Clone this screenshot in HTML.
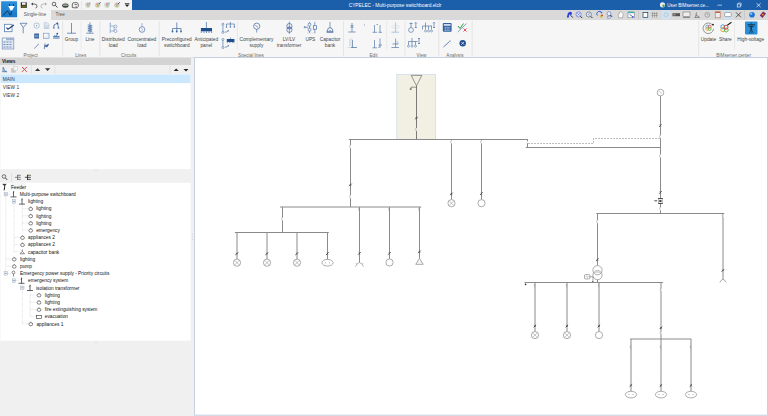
<!DOCTYPE html><html><head><meta charset="utf-8"><style>html,body{margin:0;padding:0;width:768px;height:416px;overflow:hidden;background:#f0f0f0}svg{display:block}text{font-family:'Liberation Sans', sans-serif}</style></head><body><svg width="768" height="416" viewBox="0 0 768 416"><rect x="0" y="0" width="768" height="416" fill="#f0f0f0"/><rect x="0" y="0" width="132" height="10" fill="#f4f4f4"/><rect x="132" y="0" width="636" height="10" fill="#1b5eaa"/><rect x="0" y="10" width="768" height="10" fill="#d9d9d9"/><rect x="18" y="10" width="33" height="10" fill="#f6f6f6"/><rect x="0" y="0" width="18.5" height="19.5" fill="#f4f4f4"/><rect x="0" y="20" width="768" height="37.6" fill="#f6f6f6"/><rect x="0" y="57.3" width="768" height="0.7" fill="#dcdcdc"/><defs><linearGradient id="lg" x1="0" y1="0" x2="0" y2="1"><stop offset="0" stop-color="#2b90dc"/><stop offset="1" stop-color="#1a78c8"/></linearGradient></defs><rect x="1.1" y="1.3" width="16" height="16" rx="0.6" fill="url(#lg)"/><path d="M3.4 15.5 L6.7 11.3 Q8 10.6 8.8 12.5 L9.9 14.9 Q11 15.6 11.3 13.5 V10.8" stroke="#0a1f3a" stroke-width="0.8" fill="none"/><path d="M8.2 6 L14.7 6 L12 10.5 L10.6 10.5 Z" fill="#ffffff"/><rect x="9.1" y="4" width="0.8" height="2" fill="#0a1f3a"/><rect x="13" y="4" width="0.8" height="2" fill="#0a1f3a"/><text x="348.7" y="6.6" font-size="4.8" fill="#ffffff" text-anchor="start" font-weight="normal">CYPELEC - Multi-purpose switchboard.elclr</text><text x="667.3" y="6.6" font-size="4.8" fill="#ffffff" textLength="41.5" lengthAdjust="spacingAndGlyphs">User BIMserver.ce...</text><circle cx="662.5" cy="4.8" r="2.6" fill="#e8eef5"/><circle cx="663.5" cy="5.8" r="1.2" fill="#49a84a"/><rect x="717.5" y="4.8" width="4.5" height="0.6" fill="#fff"/><rect x="737.2" y="4" width="3" height="3" fill="none" stroke="#fff" stroke-width="0.6"/><path d="M738.2 4 V3 H741.2 V6 H740.2" fill="none" stroke="#fff" stroke-width="0.5"/><path d="M756.6 3.3 L760.6 7.1 M760.6 3.3 L756.6 7.1" stroke="#fff" stroke-width="0.7"/><text x="23.7" y="15.9" font-size="4.8" fill="#555" text-anchor="start" font-weight="normal">Single-line</text><text x="55.6" y="15.9" font-size="4.6" fill="#555" text-anchor="start" font-weight="normal">Tree</text><rect x="20.8" y="2.3" width="6" height="5.6" fill="#2b2b2b"/><rect x="22" y="2.6" width="3.6" height="2.2" fill="#f4f4f4"/><rect x="21.5" y="5.6" width="4.6" height="2" fill="#6b6b1a"/><path d="M32 4 L34.5 4 Q37 4 37 6.3 Q37 8 35.5 8" stroke="#444" stroke-width="0.8" fill="none"/><path d="M31 4 L33 2.4 L33 5.6 Z" fill="#444"/><path d="M46 4 L43.5 4 Q41 4 41 6.3 Q41 8 42.5 8" stroke="#aaa" stroke-width="0.8" fill="none"/><path d="M47 4 L45 2.4 L45 5.6 Z" fill="#aaa"/><circle cx="54" cy="4" r="1.8" stroke="#333" stroke-width="0.7" fill="none"/><path d="M55.3 5.3 L57.5 7.5" stroke="#333" stroke-width="0.9"/><ellipse cx="65.4" cy="5.6" rx="3.2" ry="2.2" fill="#3c3c3c"/><path d="M63.2 4.4 Q65.4 2 67.6 4.4 Z" fill="#e8e8e8" stroke="#555" stroke-width="0.4"/><rect x="63" y="5" width="4.8" height="0.9" fill="#9ac89a"/><path d="M72.3 7.5 L72.3 4 Q72.5 2.6 74.5 2.6 L76.8 2.6 Q78.3 3 78.3 4.6 L78.3 6.5 L77 7.8 L74 7.8 Z" fill="#f0f0f0" stroke="#333" stroke-width="0.7"/><path d="M74.5 4.5 H77 M75.5 6.2 L77.5 7.8" stroke="#333" stroke-width="0.6"/><rect x="81.3" y="1" width="0.5" height="8.5" fill="#d8d8d8"/><circle cx="87.8" cy="5" r="2.5" fill="#f2ece2" stroke="#aaa" stroke-width="0.35"/><circle cx="87.0" cy="5.7" r="0.9" fill="none" stroke="#d8d8d8" stroke-width="0.6"/><circle cx="88.6" cy="4.5" r="0.9" fill="none" stroke="#5bb0e0" stroke-width="0.6"/><circle cx="88.2" cy="6.1" r="0.8" fill="none" stroke="#7cc25a" stroke-width="0.6"/><circle cx="87.39999999999999" cy="4.3" r="0.8" fill="none" stroke="#e06060" stroke-width="0.5"/><circle cx="89.8" cy="3" r="0.5" fill="#444"/><circle cx="97.7" cy="5" r="2.5" fill="#f2ece2" stroke="#aaa" stroke-width="0.35"/><circle cx="96.9" cy="5.7" r="0.9" fill="none" stroke="#f0b030" stroke-width="0.6"/><circle cx="98.5" cy="4.5" r="0.9" fill="none" stroke="#5bb0e0" stroke-width="0.6"/><circle cx="98.10000000000001" cy="6.1" r="0.8" fill="none" stroke="#7cc25a" stroke-width="0.6"/><circle cx="97.3" cy="4.3" r="0.8" fill="none" stroke="#e06060" stroke-width="0.5"/><path d="M98.9 4 L100.7 2.2" stroke="#222" stroke-width="0.7"/><circle cx="107" cy="5" r="2.5" fill="#f2ece2" stroke="#aaa" stroke-width="0.35"/><circle cx="106.2" cy="5.7" r="0.9" fill="none" stroke="#d8d8d8" stroke-width="0.6"/><circle cx="107.8" cy="4.5" r="0.9" fill="none" stroke="#5bb0e0" stroke-width="0.6"/><circle cx="107.4" cy="6.1" r="0.8" fill="none" stroke="#7cc25a" stroke-width="0.6"/><circle cx="106.6" cy="4.3" r="0.8" fill="none" stroke="#e06060" stroke-width="0.5"/><circle cx="109" cy="3" r="0.5" fill="#444"/><circle cx="116.9" cy="5" r="2.5" fill="#f2ece2" stroke="#aaa" stroke-width="0.35"/><circle cx="116.10000000000001" cy="5.7" r="0.9" fill="none" stroke="#f0b030" stroke-width="0.6"/><circle cx="117.7" cy="4.5" r="0.9" fill="none" stroke="#5bb0e0" stroke-width="0.6"/><circle cx="117.30000000000001" cy="6.1" r="0.8" fill="none" stroke="#7cc25a" stroke-width="0.6"/><circle cx="116.5" cy="4.3" r="0.8" fill="none" stroke="#e06060" stroke-width="0.5"/><path d="M118.10000000000001 4 L119.9 2.2" stroke="#222" stroke-width="0.7"/><rect x="124.8" y="3" width="4.6" height="0.7" fill="#222"/><path d="M124.8 4.6 L129.4 4.6 L127.1 7 Z" fill="#222"/><rect x="641.1" y="10.3" width="8.6" height="9" fill="#cfe3f3"/><rect x="661.7" y="10.3" width="8.6" height="9" fill="#cfe3f3"/><rect x="723.6" y="10.3" width="8.6" height="9" fill="#cfe3f3"/><rect x="638.3" y="10.5" width="0.5" height="9" fill="#b8b8b8"/><rect x="744.2" y="10.5" width="0.5" height="9" fill="#b8b8b8"/><path d="M566.8 17.6 L567.8 13.6 Q568.8 11.6 570.6 11.8 Q572.3 12.2 572 14.2 L570.6 15 L569.2 14.6 L568.8 17.6 Z" fill="#2a3ddd"/><path d="M570.6 15.2 L572.8 17.6" stroke="#222" stroke-width="0.9"/><circle cx="578.6" cy="14.4" r="2.6" fill="#e8f0ff" stroke="#4455cc" stroke-width="0.6"/><path d="M577.2 13 L580 15.8 M580 13 L577.2 15.8" stroke="#2244dd" stroke-width="0.8" stroke-dasharray="0.7 0.5"/><path d="M580.6 16.4 L582.2 18" stroke="#111" stroke-width="0.9"/><circle cx="588.8" cy="14.4" r="2.6" fill="#dde8f8" stroke="#555" stroke-width="0.6"/><path d="M589.6 13.4 L588.2 14.4 L589.6 15.4" stroke="#3366cc" stroke-width="0.5" fill="none"/><path d="M590.8 16.4 L592.4 18" stroke="#111" stroke-width="0.9"/><path d="M597.3 15.5 A2.6 2.6 0 1 1 601.8 13" stroke="#2a5ad8" stroke-width="0.9" fill="none"/><path d="M602.4 11.5 L602 13.6 L600.2 12.8 Z" fill="#2a5ad8"/><rect x="600.2" y="15.2" width="2.2" height="2.2" fill="#d8b020"/><rect x="601.4" y="14.6" width="1.4" height="1.4" fill="#d03020"/><circle cx="609" cy="13.6" r="2" fill="#eef3fb" stroke="#4466bb" stroke-width="0.6"/><path d="M610.4 15 L612 16.8" stroke="#111" stroke-width="0.9"/><rect x="607.2" y="16.2" width="3.2" height="2.2" fill="none" stroke="#6677dd" stroke-width="0.4"/><path d="M618.6 17.8 L618.4 14.2 Q618.6 12.8 619.4 13.4 L619.6 12 Q620.4 11.4 620.9 12.1 L621.3 11.8 Q622 11.8 622.2 12.6 L622.6 13 Q623.2 13.2 623 14.4 L622.6 17.8 Z" fill="#fafafa" stroke="#777" stroke-width="0.45"/><rect x="628" y="12" width="6.2" height="5.8" fill="#fff" stroke="#555" stroke-width="0.4"/><rect x="628" y="11.8" width="6.2" height="1.4" fill="#40b0b0"/><path d="M629.6 14.3 L633 17 M632 17.2 L633.2 17.2 L633 16" stroke="#1a44cc" stroke-width="0.8" fill="none"/><rect x="643" y="12.5" width="4.8" height="4.8" fill="#fff" stroke="#333" stroke-width="0.7"/><path d="M652.5 12 V17.8 M654.5 12 V17.8 M656.5 12 V17.8 M651.5 13.5 H658 M651.5 15.5 H658" stroke="#777" stroke-width="0.45"/><circle cx="666" cy="14.8" r="2" fill="none" stroke="#888" stroke-width="0.5" stroke-dasharray="0.8 0.5"/><rect x="672.5" y="13.2" width="7.5" height="3" fill="#555"/><rect x="673.5" y="13.8" width="2" height="1.6" fill="#999"/><rect x="683" y="12" width="7" height="4.5" fill="#eee" stroke="#666" stroke-width="0.5"/><rect x="683" y="17" width="7" height="0.7" fill="#666"/><path d="M694.5 17.4 H700 M695.5 17.4 L696.5 12.3 M696 15 L699 16.8" stroke="#555" stroke-width="0.6" fill="none"/><circle cx="707.3" cy="14.8" r="2.4" fill="none" stroke="#777" stroke-width="0.5"/><path d="M707.3 13.5 V14.8 H708.3" stroke="#777" stroke-width="0.45" fill="none"/><rect x="715.2" y="11.8" width="5" height="6" fill="#eee" stroke="#c0654a" stroke-width="0.6"/><rect x="715.2" y="11.8" width="5" height="1.2" fill="#c0654a"/><rect x="724.7" y="12.4" width="6.5" height="4.2" rx="0.6" fill="#fff" stroke="#666" stroke-width="0.5"/><path d="M736 12.3 L741 17.3 M741 12.3 L736 17.3" stroke="#333" stroke-width="0.8"/><circle cx="752" cy="14.8" r="2.8" fill="#1a73d8"/><circle cx="751.2" cy="13.8" r="1.2" fill="#7fc0f5"/><path d="M759.8 15.5 L763 11.5 L766 13.5 L762.5 18 Z" fill="#7b2d6e"/><circle cx="762.8" cy="14.6" r="0.9" fill="#f0a010"/><rect x="62.5" y="21" width="0.6" height="35.5" fill="#dadada"/><rect x="99.6" y="21" width="0.6" height="35.5" fill="#dadada"/><rect x="158.8" y="21" width="0.6" height="35.5" fill="#dadada"/><rect x="343" y="21" width="0.6" height="35.5" fill="#dadada"/><rect x="404.7" y="21" width="0.6" height="35.5" fill="#dadada"/><rect x="438.6" y="21" width="0.6" height="35.5" fill="#dadada"/><rect x="471.8" y="21" width="0.6" height="35.5" fill="#dadada"/><rect x="698.5" y="21" width="0.6" height="35.5" fill="#dadada"/><rect x="80.7" y="21.5" width="0.6" height="28" fill="#e0e0e0"/><rect x="236.9" y="21.5" width="0.6" height="28" fill="#e0e0e0"/><rect x="386.5" y="21.5" width="0.6" height="28" fill="#e0e0e0"/><rect x="734.3" y="21.5" width="0.6" height="28" fill="#e0e0e0"/><text x="30.6" y="57.2" font-size="4.6" fill="#6a6a6a" text-anchor="middle" font-weight="normal">Project</text><text x="80.7" y="57.2" font-size="4.6" fill="#6a6a6a" text-anchor="middle" font-weight="normal">Lines</text><text x="128.6" y="57.2" font-size="4.6" fill="#6a6a6a" text-anchor="middle" font-weight="normal">Circuits</text><text x="251" y="57.2" font-size="4.6" fill="#6a6a6a" text-anchor="middle" font-weight="normal">Special lines</text><text x="373.5" y="57.2" font-size="4.6" fill="#6a6a6a" text-anchor="middle" font-weight="normal">Edit</text><text x="421.4" y="57.2" font-size="4.6" fill="#6a6a6a" text-anchor="middle" font-weight="normal">View</text><text x="454.9" y="57.2" font-size="4.6" fill="#6a6a6a" text-anchor="middle" font-weight="normal">Analysis</text><text x="733.6" y="57.2" font-size="4.6" fill="#6a6a6a" text-anchor="middle" font-weight="normal">BIMserver.center</text><text x="71.5" y="40.6" font-size="4.8" fill="#454545" text-anchor="middle" font-weight="normal">Group</text><text x="90" y="40.6" font-size="4.8" fill="#454545" text-anchor="middle" font-weight="normal">Line</text><text x="113.2" y="40.6" font-size="4.8" fill="#454545" text-anchor="middle" font-weight="normal">Distributed</text><text x="113.2" y="46.8" font-size="4.8" fill="#454545" text-anchor="middle" font-weight="normal">load</text><text x="141.9" y="40.6" font-size="4.8" fill="#454545" text-anchor="middle" font-weight="normal">Concentrated</text><text x="141.9" y="46.8" font-size="4.8" fill="#454545" text-anchor="middle" font-weight="normal">load</text><text x="176.8" y="40.6" font-size="4.8" fill="#454545" text-anchor="middle" font-weight="normal">Preconfigured</text><text x="176.8" y="46.8" font-size="4.8" fill="#454545" text-anchor="middle" font-weight="normal">switchboard</text><text x="206.3" y="40.6" font-size="4.8" fill="#454545" text-anchor="middle" font-weight="normal">Anticipated</text><text x="206.3" y="46.8" font-size="4.8" fill="#454545" text-anchor="middle" font-weight="normal">panel</text><text x="256.4" y="40.6" font-size="4.8" fill="#454545" text-anchor="middle" font-weight="normal">Complementary</text><text x="256.4" y="46.8" font-size="4.8" fill="#454545" text-anchor="middle" font-weight="normal">supply</text><text x="289" y="40.6" font-size="4.8" fill="#454545" text-anchor="middle" font-weight="normal">LV/LV</text><text x="289" y="46.8" font-size="4.8" fill="#454545" text-anchor="middle" font-weight="normal">transformer</text><text x="310.4" y="40.6" font-size="4.8" fill="#454545" text-anchor="middle" font-weight="normal">UPS</text><text x="330" y="40.6" font-size="4.8" fill="#454545" text-anchor="middle" font-weight="normal">Capacitor</text><text x="330" y="46.8" font-size="4.8" fill="#454545" text-anchor="middle" font-weight="normal">bank</text><text x="708.5" y="40.6" font-size="4.8" fill="#454545" text-anchor="middle" font-weight="normal">Update</text><text x="725.4" y="40.6" font-size="4.8" fill="#454545" text-anchor="middle" font-weight="normal">Share</text><text x="750.7" y="40.6" font-size="4.8" fill="#454545" text-anchor="middle" font-weight="normal">High-voltage</text><rect x="4.4" y="24.3" width="7.6" height="7.4" fill="#fff" stroke="#5a7fb3" stroke-width="0.8"/><path d="M6.4 27.6 L8 29.3 L13.8 25" stroke="#1f3f78" stroke-width="1.2" fill="none"/><path d="M20.2 23.3 H27 L23.2 27.5 Z M23.2 27.5 V33.3" stroke="#3d67a0" stroke-width="0.7" fill="none"/><rect x="2.2" y="38" width="11.6" height="11" fill="#e3e9f2" stroke="#6d8fbd" stroke-width="0.7"/><rect x="2.2" y="38" width="11.6" height="2.2" fill="#9fb3cf"/><rect x="3" y="38.6" width="3" height="1.8" fill="#fff"/><path d="M3.5 42 H12.5 M3.5 44.5 H12.5 M3.5 47 H12.5" stroke="#5d80b3" stroke-width="0.9" stroke-dasharray="2 1"/><rect x="34.2" y="23.2" width="4.8" height="4.8" rx="1.2" fill="none" stroke="#8fa6c4" stroke-width="0.6"/><circle cx="36.6" cy="25.6" r="0.6" fill="#7890b0"/><path d="M44.3 22.8 H47.3 L48.8 24.3 V28.5 H44.3 Z M45.2 25 H47.8 M45.2 26.3 H47.8 M45.2 27.5 H47.8" stroke="#8fa6c4" stroke-width="0.5" fill="#f3f6fa"/><path d="M53.8 27.6 L53.9 25.2 L57.6 23 L58.4 27.5 M53.9 25.2 H55" stroke="#3d67a0" stroke-width="0.7" fill="none"/><circle cx="53.8" cy="27.8" r="0.9" fill="#5a80b8"/><circle cx="58.5" cy="27.8" r="0.9" fill="#5a80b8"/><circle cx="57.3" cy="23.5" r="0.9" fill="#2d5592"/><rect x="34.2" y="33.5" width="4.8" height="5" fill="#3d67a0"/><rect x="34.8" y="35.2" width="3.6" height="0.5" fill="#b8c8de"/><rect x="34.8" y="36.6" width="3.6" height="0.5" fill="#b8c8de"/><rect x="43.6" y="33.2" width="5.4" height="5.2" fill="#e8eef6" stroke="#6f90bd" stroke-width="0.6"/><rect x="44.3" y="33.9" width="2.3" height="2.2" fill="#fff"/><rect x="53.2" y="36" width="6.3" height="2.6" fill="#5a80b8"/><rect x="53.2" y="37" width="6.3" height="0.5" fill="#e0e8f3"/><path d="M56.8 36 V34.3" stroke="#2d5592" stroke-width="0.7"/><circle cx="57.3" cy="33.6" r="0.9" fill="#2d5592"/><path d="M54 35.5 H55.5" stroke="#2d5592" stroke-width="0.5"/><path d="M34.2 48.5 L38.2 44.6" stroke="#3d67a0" stroke-width="0.7"/><path d="M38.4 43.6 V45 M37.7 44.3 H39.1" stroke="#7d9dc4" stroke-width="0.4"/><path d="M44.2 49 L45 43.5 M45 46 L48.6 44.2 L47 47 Z" stroke="#2d5592" stroke-width="0.7" fill="#3d67a0"/><path d="M71.5 23 V33.2 M67 33.2 H76" stroke="#3d67a0" stroke-width="0.7"/><path d="M90 22.3 V33.2 M86.3 33.2 H93.7" stroke="#3d67a0" stroke-width="0.65"/><path d="M87.8 24.8 L92.2 25.8 L87.8 26.8 L92.2 27.8 L87.8 28.8 L92.2 29.8 L87.8 30.8 L92.2 31.6" stroke="#3d67a0" stroke-width="0.65" fill="none"/><path d="M110.2 22.5 V33 M110.2 26 H114 M110.2 31 H114 M111 23.5 L110 24.3" stroke="#6a8fc0" stroke-width="0.6" fill="none"/><circle cx="115.5" cy="26.5" r="1.5" fill="none" stroke="#6a8fc0" stroke-width="0.6"/><circle cx="115.5" cy="31" r="1.5" fill="none" stroke="#6a8fc0" stroke-width="0.6"/><path d="M114 26.5 V31" stroke="#6a8fc0" stroke-width="0.5"/><path d="M142 23 V26.5" stroke="#6a8fc0" stroke-width="0.6"/><circle cx="142" cy="29.5" r="2.8" fill="none" stroke="#4a72aa" stroke-width="0.7"/><path d="M141.4 28.3 L142.6 29.5 L141.6 30.7" stroke="#4a72aa" stroke-width="0.5" fill="none"/><path d="M176.8 22.5 V28.5 M172.5 28.5 H181 M172.5 28.5 V31 M176.8 28.5 V31 M181 28.5 V31" stroke="#3d67a0" stroke-width="0.7" fill="none"/><circle cx="172.5" cy="31.5" r="0.9" fill="#3d67a0"/><circle cx="176.8" cy="31.5" r="0.9" fill="#3d67a0"/><circle cx="181" cy="31.5" r="0.9" fill="#3d67a0"/><path d="M206.4 22 V28.2" stroke="#3d67a0" stroke-width="0.65"/><rect x="200.9" y="28" width="11.1" height="3.3" fill="#1f4f8f"/><path d="M201.3 31.3 V33 M204 31.3 V33 M206.5 31.3 V33 M209 31.3 V33 M211.6 31.3 V33" stroke="#1f4f8f" stroke-width="0.6"/><circle cx="222.9" cy="24.2" r="1" fill="#fff" stroke="#3d67a0" stroke-width="0.6"/><circle cx="222.9" cy="32.4" r="1" fill="#fff" stroke="#3d67a0" stroke-width="0.6"/><path d="M222.9 25.2 V31.4 M224.8 32 H227 L228.2 30.6 M227.5 30.4 H228.6 V31.5" stroke="#3d67a0" stroke-width="0.6" fill="none"/><path d="M230.4 22 V24 M226.5 24 H234.3 M226.5 24 V26.5 M230.4 24 V26.5 M234.3 24 V26.5" stroke="#3d67a0" stroke-width="0.6" fill="none"/><circle cx="226.5" cy="27" r="0.7" fill="#3d67a0"/><circle cx="230.4" cy="27" r="0.7" fill="#3d67a0"/><circle cx="234.3" cy="27" r="0.7" fill="#3d67a0"/><circle cx="222.9" cy="39.5" r="1" fill="#fff" stroke="#3d67a0" stroke-width="0.6"/><circle cx="222.9" cy="47.5" r="1" fill="#fff" stroke="#3d67a0" stroke-width="0.6"/><path d="M222.9 40.5 V46.5 M224.8 47 H227 L228.2 45.6 M227.5 45.4 H228.6 V46.5" stroke="#3d67a0" stroke-width="0.6" fill="none"/><path d="M230.5 37.5 V39" stroke="#3d67a0" stroke-width="0.6"/><rect x="226.8" y="39" width="7.6" height="3" fill="#1f4f8f"/><path d="M227.3 42 V43.2 M229.8 42 V43.2 M232.3 42 V43.2 M234 42 V43.2" stroke="#1f4f8f" stroke-width="0.5"/><circle cx="256.7" cy="26.2" r="3.1" fill="none" stroke="#3d67a0" stroke-width="0.7"/><path d="M255.2 25.2 L258 27.2 M256.7 29.3 V32.5" stroke="#3d67a0" stroke-width="0.65"/><path d="M289.4 21.5 V34" stroke="#3d67a0" stroke-width="0.55"/><ellipse cx="289.4" cy="26.2" rx="2.6" ry="2.8" fill="none" stroke="#3d67a0" stroke-width="0.7"/><ellipse cx="289.4" cy="29.6" rx="2.6" ry="2.8" fill="none" stroke="#3d67a0" stroke-width="0.7"/><path d="M287.4 27.9 H291.4" stroke="#3d67a0" stroke-width="0.8"/><path d="M304 27.2 H308" stroke="#3d67a0" stroke-width="0.7"/><path d="M305.2 26 L304 27.2 L305.2 28.4" stroke="#3d67a0" stroke-width="0.6" fill="none"/><path d="M309.5 22 V33 M314.8 21.8 V33" stroke="#3d67a0" stroke-width="0.6"/><rect x="308.2" y="23.2" width="2.6" height="2.8" rx="0.8" fill="#fff" stroke="#3d67a0" stroke-width="0.6"/><rect x="308.2" y="28.2" width="2.6" height="2.8" rx="0.4" fill="#fff" stroke="#3d67a0" stroke-width="0.6"/><rect x="313.3" y="25.8" width="3.2" height="3.4" fill="#fff" stroke="#3d67a0" stroke-width="0.7"/><path d="M307 33 H316" stroke="#9ab0cc" stroke-width="0.5" stroke-dasharray="0.7 0.5"/><path d="M330 22 V27.5" stroke="#3d67a0" stroke-width="0.6"/><path d="M327 31.8 Q327.5 27.5 330 27.5 Q332.5 27.5 333 31.8 Z" fill="none" stroke="#3d67a0" stroke-width="0.75"/><path d="M326.6 32.2 H333.4" stroke="#3d67a0" stroke-width="0.8"/><path d="M328.8 31 Q330 29.5 331.2 31" stroke="#3d67a0" stroke-width="0.5" fill="none"/><path d="M348.3 32 H355.6 M352 23 V32 M350.5 25 L353.5 28 M353.5 25 L350.5 28" stroke="#3d67a0" stroke-width="0.6"/><path d="M364.4 23.8 V26" stroke="#7d9dc4" stroke-width="0.5"/><path d="M372.5 32.3 H377 M374.5 25 V32.3 M380 25 V32.3 M378.5 32.3 H382 M376.5 24.5 H378" stroke="#3d67a0" stroke-width="0.6"/><path d="M347.5 47.5 H357 M352 38 V47.5 M349.5 39 V46.5 M350.8 38.5 V46.5" stroke="#bcc8d8" stroke-width="0.5"/><path d="M352.5 40 V47.5 M351 47.5 H357" stroke="#3d67a0" stroke-width="0.6"/><path d="M372.5 47.8 H377 M374.5 40 V47.8 M380 38.5 V47.8 M378.5 45 H382" stroke="#3d67a0" stroke-width="0.6"/><path d="M378.3 48 L380.3 46" stroke="#3d67a0" stroke-width="0.6"/><path d="M391.5 32.2 H399 M395.6 22.5 V32.2" stroke="#8aa3c4" stroke-width="0.6"/><ellipse cx="395.6" cy="26.8" rx="4" ry="1.5" fill="none" stroke="#c8d2de" stroke-width="0.5"/><path d="M391.5 47.5 H399 M395.6 38.5 V47.5 M392.5 44 H398.5" stroke="#3d67a0" stroke-width="0.6"/><path d="M396.5 41 L398 42.5 L396.5 44" stroke="#3d67a0" stroke-width="0.4" fill="none"/><circle cx="411" cy="30" r="2.4" fill="none" stroke="#3d67a0" stroke-width="0.6"/><path d="M411 22.5 V27.6 M409.5 23.5 L412.5 23.5 M415.8 22.5 V28 M414.8 23.5 L415.8 22.5 L416.8 23.5 M414.8 27 L415.8 28 L416.8 27" stroke="#3d67a0" stroke-width="0.6" fill="none"/><path d="M425.5 22.5 V26 M422.5 26 H432 M422.5 26 V29.5 M425.5 26 V29.5 M428.5 26 V29.5 M431.5 26 V29.5 M434 22.3 V28 M433 23.3 L434 22.3 L435 23.3 M433 27 L434 28 L435 27" stroke="#3d67a0" stroke-width="0.6" fill="none"/><circle cx="425.5" cy="31" r="1" fill="none" stroke="#3d67a0" stroke-width="0.5"/><circle cx="428.5" cy="31" r="1" fill="none" stroke="#3d67a0" stroke-width="0.5"/><circle cx="431.5" cy="31" r="1" fill="none" stroke="#3d67a0" stroke-width="0.5"/><path d="M412 38 V41.5 M408.5 41.5 H417.5 M408.5 41.5 V45 M412 41.5 V45 M415.5 41.5 V45 M419 38 V44 M418 39 L419 38 L420 39 M418 43 L419 44 L420 43" stroke="#3d67a0" stroke-width="0.6" fill="none"/><circle cx="408.5" cy="46.2" r="1" fill="none" stroke="#3d67a0" stroke-width="0.5"/><circle cx="412" cy="46.2" r="1" fill="none" stroke="#3d67a0" stroke-width="0.5"/><circle cx="415.5" cy="46.2" r="1" fill="none" stroke="#3d67a0" stroke-width="0.5"/><rect x="442.8" y="23" width="8.8" height="8.8" rx="1" fill="#2f5fa0"/><rect x="443.8" y="24" width="6.8" height="1.8" fill="#cfdcee"/><path d="M444 27.5 H450.5 M444 29 H450.5 M444 30.5 H450.5 M445.5 26.5 V31 M447.2 26.5 V31 M448.8 26.5 V31" stroke="#cfdcee" stroke-width="0.35"/><path d="M458 26 L460 28.5 L463.5 23.5" stroke="#25a03a" stroke-width="1" fill="none"/><path d="M457.8 32 L466.5 23.5" stroke="#3d67a0" stroke-width="0.6"/><path d="M463.5 28.5 L466.5 31.5 M466.5 28.5 L463.5 31.5" stroke="#e0283a" stroke-width="0.8"/><path d="M443.5 47 L449.5 41.5" stroke="#3d67a0" stroke-width="0.8"/><path d="M450 40 V42 M449 41 H451" stroke="#7d9dc4" stroke-width="0.4"/><circle cx="462.7" cy="43.3" r="3.2" fill="#1f4f8f"/><path d="M461.3 41.9 L464.1 44.7 M464.1 41.9 L461.3 44.7" stroke="#fff" stroke-width="0.7"/><path d="M712.5 25 A5.3 5.3 0 1 0 713.6 28.8" stroke="#555" stroke-width="0.6" fill="none"/><circle cx="713" cy="24.6" r="0.9" fill="#111"/><circle cx="707.3" cy="26.6" r="1.5" fill="none" stroke="#3aa0e0" stroke-width="0.8"/><circle cx="709.7" cy="26.6" r="1.5" fill="none" stroke="#e04848" stroke-width="0.8"/><circle cx="707.2" cy="29" r="1.5" fill="none" stroke="#f0a030" stroke-width="0.8"/><circle cx="709.6" cy="29" r="1.5" fill="none" stroke="#5cbb4a" stroke-width="0.8"/><circle cx="722.8" cy="26.8" r="2" fill="none" stroke="#3aa0e0" stroke-width="1"/><circle cx="722.8" cy="29.6" r="2" fill="none" stroke="#f0a030" stroke-width="1"/><circle cx="726.2" cy="30" r="2" fill="none" stroke="#5cbb4a" stroke-width="1"/><circle cx="726" cy="27.2" r="2" fill="none" stroke="#e04848" stroke-width="1"/><path d="M727.3 25.3 L731.5 22.3" stroke="#222" stroke-width="1.1"/><rect x="745" y="21.6" width="12.5" height="12.8" rx="0.8" fill="#2a8fd6"/><path d="M751.2 22.5 V33.5 M748 24.5 H754.5 M748.5 26.5 H754 M749.3 24.5 L753.4 33.5 M753.1 24.5 L749 33.5 M748 24.5 V25.8 M754.5 24.5 V25.8" stroke="#10202e" stroke-width="0.55"/><rect x="0" y="58" width="191" height="7" fill="#d3d3d3"/><text x="2" y="63.4" font-size="4.8" fill="#222" text-anchor="start" font-weight="bold">Views</text><rect x="0" y="65" width="191" height="9.5" fill="#f0f0f0"/><rect x="31.3" y="65" width="0.6" height="9.5" fill="#dadada"/><rect x="54.6" y="65" width="0.6" height="9.5" fill="#dadada"/><rect x="169.7" y="65" width="0.6" height="9.5" fill="#dadada"/><path d="M3 67 L3 71.8 M3.6 67.5 L4.6 71.2 M2.2 71.7 H5" stroke="#4a72aa" stroke-width="0.8"/><rect x="5" y="70.8" width="1.8" height="1.4" fill="#4a72aa"/><rect x="6.2" y="71.5" width="1" height="0.8" fill="#9bbbe0"/><rect x="11.2" y="68.2" width="4.6" height="4.4" fill="#c4c4c4"/><rect x="13.6" y="66.6" width="3.9" height="3.9" fill="#f4f4f4" stroke="#c8c8c8" stroke-width="0.5"/><path d="M22 67 L26.8 71.8 M26.8 67 L22 71.8" stroke="#d9454a" stroke-width="1"/><path d="M35 71 L37.6 68.3 L40.2 71 Z" fill="#333"/><path d="M45 68.3 L50.2 68.3 L47.6 71 Z" fill="#333"/><path d="M173.7 71 L176.2 68.5 L178.7 71 Z" fill="#222"/><path d="M183.5 69 L188.5 69 L186 71.5 Z" fill="#222"/><rect x="0.5" y="74.5" width="190" height="94.6" fill="#ffffff"/><rect x="0.5" y="74.5" width="190" height="8.6" fill="#cce8ff"/><text x="2.8" y="80.6" font-size="4.8" fill="#333" text-anchor="start" font-weight="normal">MAIN</text><text x="2.8" y="88.6" font-size="4.8" fill="#333" text-anchor="start" font-weight="normal">VIEW 1</text><text x="2.8" y="96.6" font-size="4.8" fill="#333" text-anchor="start" font-weight="normal">VIEW 2</text><rect x="0" y="169.2" width="191" height="13.5" fill="#f0f0f0"/><path d="M94 170.3 H98" stroke="#c8c8c8" stroke-width="0.4" stroke-dasharray="0.6 0.6"/><circle cx="4" cy="176.5" r="1.8" fill="none" stroke="#333" stroke-width="0.65"/><path d="M5.3 177.8 L7.3 180" stroke="#333" stroke-width="0.9"/><rect x="11.3" y="173" width="0.5" height="9" fill="#d0d0d0"/><path d="M17.3 175.3 H20.8 M17.3 177.3 H20.8 M17.3 179.4 H20.8 M17.6 174.8 V180 M15 177.3 H17.3" stroke="#555" stroke-width="0.7"/><path d="M27.2 175.3 H30.8 M27.2 177.3 H30.8 M27.2 179.4 H30.8 M27.5 174.8 V180 M24.9 177.3 H27.2" stroke="#222" stroke-width="0.8"/><rect x="28.5" y="174.9" width="1.5" height="0.8" fill="#c8b040"/><rect x="0.5" y="182.7" width="190" height="158" fill="#ffffff"/><path d="M94 342.5 H98" stroke="#c8c8c8" stroke-width="0.4" stroke-dasharray="0.6 0.6"/><rect x="192.2" y="233.8" width="0.9" height="0.9" fill="#c8c8c8"/><rect x="192.2" y="236.6" width="0.9" height="0.9" fill="#c8c8c8"/><rect x="192.2" y="239.2" width="0.9" height="0.9" fill="#d0d0d0"/><rect x="194.5" y="57.5" width="573" height="357.7" fill="#ffffff" stroke="#c3d1e2" stroke-width="1"/><path d="M5.8 196 L5.8 273.4" stroke="#b8b8b8" stroke-width="0.45" stroke-dasharray="0.6 0.6"/><path d="M14 203 L14 251.8" stroke="#b8b8b8" stroke-width="0.45" stroke-dasharray="0.6 0.6"/><path d="M22.3 204 L22.3 230.2" stroke="#b8b8b8" stroke-width="0.45" stroke-dasharray="0.6 0.6"/><path d="M22.3 208.6 L28.3 208.6" stroke="#b8b8b8" stroke-width="0.45" stroke-dasharray="0.6 0.6"/><path d="M22.3 215.8 L28.3 215.8" stroke="#b8b8b8" stroke-width="0.45" stroke-dasharray="0.6 0.6"/><path d="M22.3 223.0 L28.3 223.0" stroke="#b8b8b8" stroke-width="0.45" stroke-dasharray="0.6 0.6"/><path d="M22.3 230.2 L28.3 230.2" stroke="#b8b8b8" stroke-width="0.45" stroke-dasharray="0.6 0.6"/><path d="M14 237.4 L20.3 237.4" stroke="#b8b8b8" stroke-width="0.45" stroke-dasharray="0.6 0.6"/><path d="M14 244.6 L20.3 244.6" stroke="#b8b8b8" stroke-width="0.45" stroke-dasharray="0.6 0.6"/><path d="M14 251.8 L20.3 251.8" stroke="#b8b8b8" stroke-width="0.45" stroke-dasharray="0.6 0.6"/><path d="M5.8 194.2 L11 194.2" stroke="#b8b8b8" stroke-width="0.45" stroke-dasharray="0.6 0.6"/><path d="M5.8 259.0 L11 259.0" stroke="#b8b8b8" stroke-width="0.45" stroke-dasharray="0.6 0.6"/><path d="M5.8 266.2 L11 266.2" stroke="#b8b8b8" stroke-width="0.45" stroke-dasharray="0.6 0.6"/><path d="M5.8 273.4 L11 273.4" stroke="#b8b8b8" stroke-width="0.45" stroke-dasharray="0.6 0.6"/><path d="M5.8 275.0 L5.8 275.0" stroke="#b8b8b8" stroke-width="0.45" stroke-dasharray="0.6 0.6"/><path d="M14 275.4 L14 280.6" stroke="#b8b8b8" stroke-width="0.45" stroke-dasharray="0.6 0.6"/><path d="M14 280.6 L19 280.6" stroke="#b8b8b8" stroke-width="0.45" stroke-dasharray="0.6 0.6"/><path d="M22.3 289.8 L22.3 323.8" stroke="#b8b8b8" stroke-width="0.45" stroke-dasharray="0.6 0.6"/><path d="M22.3 323.8 L28 323.8" stroke="#b8b8b8" stroke-width="0.45" stroke-dasharray="0.6 0.6"/><path d="M22.3 283.1 L22.3 287.8" stroke="#b8b8b8" stroke-width="0.45" stroke-dasharray="0.6 0.6"/><path d="M30 290.3 L30 316.6" stroke="#b8b8b8" stroke-width="0.45" stroke-dasharray="0.6 0.6"/><path d="M30 295.0 L36.5 295.0" stroke="#b8b8b8" stroke-width="0.45" stroke-dasharray="0.6 0.6"/><path d="M30 302.2 L36.5 302.2" stroke="#b8b8b8" stroke-width="0.45" stroke-dasharray="0.6 0.6"/><path d="M30 309.4 L36.5 309.4" stroke="#b8b8b8" stroke-width="0.45" stroke-dasharray="0.6 0.6"/><path d="M30 316.6 L36.5 316.6" stroke="#b8b8b8" stroke-width="0.45" stroke-dasharray="0.6 0.6"/><path d="M2.5 187.0 L2.5 187.0" stroke="#b8b8b8" stroke-width="0.45" stroke-dasharray="0.6 0.6"/><rect x="10" y="183" width="16" height="7.4" fill="#f6f6f6"/><path d="M2.7 184.2 H6.3 L4.5 185.9 Z" fill="#111" stroke="#111" stroke-width="0.4"/><path d="M4.8 186.2 L4.1 190.4" stroke="#222" stroke-width="1"/><text x="10.9" y="188.7" font-size="4.8" fill="#111" text-anchor="start" font-weight="normal">Feeder</text><path d="M10.5 196.89999999999998 H16.5 M13.5 196.89999999999998 V191.2" stroke="#222" stroke-width="0.7"/><path d="M12.9 193.2 L14.2 191.6" stroke="#222" stroke-width="0.5"/><text x="19.7" y="195.89999999999998" font-size="4.8" fill="#111" text-anchor="start" font-weight="normal">Multi-purpose switchboard</text><path d="M19 204.1 H25 M22 204.1 V198.4" stroke="#222" stroke-width="0.7"/><path d="M21.4 200.4 L22.7 198.8" stroke="#222" stroke-width="0.5"/><text x="28.0" y="203.1" font-size="4.8" fill="#111" text-anchor="start" font-weight="normal">lighting</text><ellipse cx="30.7" cy="209.0" rx="1.9" ry="1.6" fill="none" stroke="#222" stroke-width="0.55"/><path d="M30.7 206.4 V207.4" stroke="#222" stroke-width="0.4"/><text x="36.2" y="210.29999999999998" font-size="4.8" fill="#111" text-anchor="start" font-weight="normal">lighting</text><ellipse cx="30.7" cy="216.20000000000002" rx="1.9" ry="1.6" fill="none" stroke="#222" stroke-width="0.55"/><path d="M30.7 213.60000000000002 V214.60000000000002" stroke="#222" stroke-width="0.4"/><text x="36.2" y="217.5" font-size="4.8" fill="#111" text-anchor="start" font-weight="normal">lighting</text><ellipse cx="30.7" cy="223.4" rx="1.9" ry="1.6" fill="none" stroke="#222" stroke-width="0.55"/><path d="M30.7 220.8 V221.8" stroke="#222" stroke-width="0.4"/><text x="36.2" y="224.7" font-size="4.8" fill="#111" text-anchor="start" font-weight="normal">lighting</text><ellipse cx="30.7" cy="230.6" rx="1.9" ry="1.6" fill="none" stroke="#222" stroke-width="0.55"/><path d="M30.7 228.0 V229.0" stroke="#222" stroke-width="0.4"/><text x="36.2" y="231.89999999999998" font-size="4.8" fill="#111" text-anchor="start" font-weight="normal">emergency</text><ellipse cx="22.5" cy="237.8" rx="1.9" ry="1.6" fill="none" stroke="#222" stroke-width="0.55"/><path d="M22.5 235.20000000000002 V236.20000000000002" stroke="#222" stroke-width="0.4"/><text x="28.0" y="239.1" font-size="4.8" fill="#111" text-anchor="start" font-weight="normal">appliances 2</text><ellipse cx="22.5" cy="245.0" rx="1.9" ry="1.6" fill="none" stroke="#222" stroke-width="0.55"/><path d="M22.5 242.4 V243.4" stroke="#222" stroke-width="0.4"/><text x="28.0" y="246.29999999999998" font-size="4.8" fill="#111" text-anchor="start" font-weight="normal">appliances 2</text><path d="M20.1 253.8 L22.3 251.3 L24.5 253.8 Z M22.3 251.3 V249.3" fill="none" stroke="#222" stroke-width="0.5"/><text x="28.0" y="253.5" font-size="4.8" fill="#111" text-anchor="start" font-weight="normal">capacitor bank</text><ellipse cx="14.2" cy="259.4" rx="1.9" ry="1.6" fill="none" stroke="#222" stroke-width="0.55"/><path d="M14.2 256.79999999999995 V257.79999999999995" stroke="#222" stroke-width="0.4"/><text x="20.0" y="260.7" font-size="4.8" fill="#111" text-anchor="start" font-weight="normal">lighting</text><ellipse cx="14.2" cy="266.59999999999997" rx="1.9" ry="1.6" fill="none" stroke="#222" stroke-width="0.55"/><path d="M14.2 263.99999999999994 V264.99999999999994" stroke="#222" stroke-width="0.4"/><text x="20.0" y="267.9" font-size="4.8" fill="#111" text-anchor="start" font-weight="normal">pump</text><circle cx="13.5" cy="272.4" r="1.4" fill="none" stroke="#222" stroke-width="0.5"/><path d="M13.5 273.79999999999995 V276.4" stroke="#222" stroke-width="0.5"/><text x="20.0" y="275.09999999999997" font-size="4.8" fill="#111" text-anchor="start" font-weight="normal">Emergency power supply - Priority circuits</text><path d="M18.5 283.3 H24.5 M21.5 283.3 V277.6" stroke="#222" stroke-width="0.7"/><path d="M20.9 279.6 L22.2 278.0" stroke="#222" stroke-width="0.5"/><text x="28.0" y="282.3" font-size="4.8" fill="#111" text-anchor="start" font-weight="normal">emergency system</text><path d="M27 290.5 H33 M30 290.5 V284.8" stroke="#222" stroke-width="0.7"/><path d="M29.4 286.8 L30.7 285.2" stroke="#222" stroke-width="0.5"/><text x="36.0" y="289.5" font-size="4.8" fill="#111" text-anchor="start" font-weight="normal">isolation transformer</text><ellipse cx="39" cy="295.4" rx="1.9" ry="1.6" fill="none" stroke="#222" stroke-width="0.55"/><path d="M39 292.79999999999995 V293.79999999999995" stroke="#222" stroke-width="0.4"/><text x="44.8" y="296.7" font-size="4.8" fill="#111" text-anchor="start" font-weight="normal">lighting</text><ellipse cx="39" cy="302.59999999999997" rx="1.9" ry="1.6" fill="none" stroke="#222" stroke-width="0.55"/><path d="M39 299.99999999999994 V300.99999999999994" stroke="#222" stroke-width="0.4"/><text x="44.8" y="303.9" font-size="4.8" fill="#111" text-anchor="start" font-weight="normal">lighting</text><ellipse cx="39" cy="309.79999999999995" rx="1.9" ry="1.6" fill="none" stroke="#222" stroke-width="0.55"/><path d="M39 307.19999999999993 V308.19999999999993" stroke="#222" stroke-width="0.4"/><text x="44.8" y="311.09999999999997" font-size="4.8" fill="#111" text-anchor="start" font-weight="normal">fire extinguishing system</text><rect x="36.5" y="315.40000000000003" width="5" height="3" fill="none" stroke="#222" stroke-width="0.55"/><text x="44.8" y="318.3" font-size="4.8" fill="#111" text-anchor="start" font-weight="normal">evacuation</text><ellipse cx="30.8" cy="324.2" rx="1.9" ry="1.6" fill="none" stroke="#222" stroke-width="0.55"/><path d="M30.8 321.59999999999997 V322.59999999999997" stroke="#222" stroke-width="0.4"/><text x="36.4" y="325.5" font-size="4.8" fill="#111" text-anchor="start" font-weight="normal">appliances 1</text><rect x="4.1" y="192.5" width="3.4" height="3.4" fill="#eef2f8" stroke="#9aa4b4" stroke-width="0.45"/><path d="M4.8 194.2 H6.8" stroke="#3a5a9a" stroke-width="0.5"/><rect x="12.3" y="199.70000000000002" width="3.4" height="3.4" fill="#eef2f8" stroke="#9aa4b4" stroke-width="0.45"/><path d="M13 201.4 H15" stroke="#3a5a9a" stroke-width="0.5"/><rect x="4.1" y="271.7" width="3.4" height="3.4" fill="#eef2f8" stroke="#9aa4b4" stroke-width="0.45"/><path d="M4.8 273.4 H6.8" stroke="#3a5a9a" stroke-width="0.5"/><rect x="12.3" y="278.90000000000003" width="3.4" height="3.4" fill="#eef2f8" stroke="#9aa4b4" stroke-width="0.45"/><path d="M13 280.6 H15" stroke="#3a5a9a" stroke-width="0.5"/><rect x="20.6" y="286.1" width="3.4" height="3.4" fill="#eef2f8" stroke="#9aa4b4" stroke-width="0.45"/><path d="M21.3 287.8 H23.3" stroke="#3a5a9a" stroke-width="0.5"/><rect x="396.8" y="74.3" width="38.6" height="65" fill="#f2f0e2" stroke="#c9d7ea" stroke-width="0.7"/><path d="M411.2 75.4 H421.8 L416.5 85.8 Z" stroke="#555" stroke-width="0.6" fill="none" /><path d="M416.5 85.8 V139.5" stroke="#7a7a7a" stroke-width="1" fill="none" /><path d="M416.5 87.2 H411 V89.3" stroke="#555" stroke-width="0.6" fill="none" /><rect x="409.8" y="88.6" width="1.6" height="1" fill="#333"/><path d="M415.2 119.3 L417.6 116.9" stroke="#3a3a3a" stroke-width="1.0" fill="none" /><path d="M415.6 117.3 L417.2 118.9" stroke="#555" stroke-width="0.6" fill="none" /><rect x="415.9" y="127.9" width="1.2" height="3.2" fill="#f2f0e2"/><path d="M416.5 127.7 Q415.2 128.9 415.9 130.1 Q416.3 130.7 416.5 131.3" stroke="#888" stroke-width="0.55" fill="none" /><path d="M348.8 139.5 H527.9" stroke="#8a8a8a" stroke-width="1" fill="none" /><path d="M527.5 139.5 V141.3" stroke="#8a8a8a" stroke-width="1" fill="none" /><path d="M527.4 141.6 L526.6 142.6" stroke="#888" stroke-width="0.5" fill="none" /><path d="M527.5 143.2 V147.5" stroke="#8a8a8a" stroke-width="1" fill="none" /><path d="M525.7 147.5 H660.5" stroke="#8a8a8a" stroke-width="1" fill="none" /><path d="M528.5 143.5 H593.5 V138.5 H660.5" stroke="#555" stroke-width="0.7" fill="none" stroke-dasharray="1.1 1.9"/><circle cx="660.5" cy="92.6" r="3.3" fill="#fff" stroke="#8a8a8a" stroke-width="0.7"/><path d="M658.9 92 Q659.7 91 660.5 92.4 Q661.3 93.6 662.1 92.6" stroke="#8a8a8a" stroke-width="0.5" fill="none" /><path d="M660.5 95.9 V213.5" stroke="#8a8a8a" stroke-width="1" fill="none" /><path d="M659.2 126.69999999999999 L661.6 124.3" stroke="#3a3a3a" stroke-width="1.0" fill="none" /><path d="M659.6 124.69999999999999 L661.2 126.3" stroke="#555" stroke-width="0.6" fill="none" /><rect x="659.9" y="135.20000000000002" width="1.2" height="3.2" fill="#fff"/><path d="M660.5 135.0 Q659.2 136.20000000000002 659.9 137.4 Q660.3 138.0 660.5 138.60000000000002" stroke="#888" stroke-width="0.55" fill="none" /><rect x="659.9" y="154.4" width="1.2" height="3.2" fill="#fff"/><path d="M660.5 154.2 Q659.2 155.4 659.9 156.6 Q660.3 157.2 660.5 157.8" stroke="#888" stroke-width="0.55" fill="none" /><path d="M659.2 193.6 L661.6 191.2" stroke="#3a3a3a" stroke-width="1.0" fill="none" /><path d="M659.6 191.6 L661.2 193.2" stroke="#555" stroke-width="0.6" fill="none" /><rect x="658.3" y="198.6" width="4.4" height="4.8" fill="#fff" stroke="#666" stroke-width="0.4"/><path d="M658.2 198.6 H662.8 M658.2 203.4 H662.8" stroke="#222" stroke-width="0.8" fill="none" /><rect x="659.3" y="200" width="2.2" height="2" fill="#444"/><path d="M654.3 200.8 H657.2" stroke="#222" stroke-width="0.8" fill="none" /><rect x="659.9" y="207.20000000000002" width="1.2" height="3.2" fill="#fff"/><path d="M660.5 207.0 Q659.2 208.20000000000002 659.9 209.4 Q660.3 210.0 660.5 210.60000000000002" stroke="#888" stroke-width="0.55" fill="none" /><path d="M350.5 139.5 V207" stroke="#8a8a8a" stroke-width="1" fill="none" /><rect x="349.9" y="145.1" width="1.2" height="3.2" fill="#fff"/><path d="M350.5 144.89999999999998 Q349.2 146.1 349.9 147.29999999999998 Q350.3 147.89999999999998 350.5 148.5" stroke="#888" stroke-width="0.55" fill="none" /><path d="M349.2 186.1 L351.6 183.7" stroke="#3a3a3a" stroke-width="1.0" fill="none" /><path d="M349.6 184.1 L351.2 185.7" stroke="#555" stroke-width="0.6" fill="none" /><rect x="349.9" y="195.1" width="1.2" height="3.2" fill="#fff"/><path d="M350.5 194.89999999999998 Q349.2 196.1 349.9 197.29999999999998 Q350.3 197.89999999999998 350.5 198.5" stroke="#888" stroke-width="0.55" fill="none" /><path d="M451.5 139.5 V199.6" stroke="#8a8a8a" stroke-width="1" fill="none" /><rect x="450.9" y="140.4" width="1.2" height="3.2" fill="#fff"/><path d="M451.5 140.2 Q450.2 141.4 450.9 142.6 Q451.3 143.2 451.5 143.8" stroke="#888" stroke-width="0.55" fill="none" /><path d="M450.2 195.1 L452.6 192.7" stroke="#3a3a3a" stroke-width="1.0" fill="none" /><path d="M450.6 193.1 L452.2 194.7" stroke="#555" stroke-width="0.6" fill="none" /><circle cx="451.5" cy="203.2" r="3.6" fill="#fff" stroke="#8a8a8a" stroke-width="0.7"/><path d="M449.052 200.75199999999998 L453.948 205.648 M453.948 200.75199999999998 L449.052 205.648" stroke="#8a8a8a" stroke-width="0.5" fill="none" /><path d="M481.5 139.5 V199.5" stroke="#8a8a8a" stroke-width="1" fill="none" /><rect x="480.9" y="140.4" width="1.2" height="3.2" fill="#fff"/><path d="M481.5 140.2 Q480.2 141.4 480.9 142.6 Q481.3 143.2 481.5 143.8" stroke="#888" stroke-width="0.55" fill="none" /><path d="M480.2 194.79999999999998 L482.6 192.39999999999998" stroke="#3a3a3a" stroke-width="1.0" fill="none" /><path d="M480.6 192.79999999999998 L482.2 194.39999999999998" stroke="#555" stroke-width="0.6" fill="none" /><circle cx="481.5" cy="203.2" r="3.6" fill="#fff" stroke="#8a8a8a" stroke-width="0.7"/><path d="M280 207 H421.2" stroke="#8a8a8a" stroke-width="1" fill="none" /><path d="M282.5 207 V232.5" stroke="#8a8a8a" stroke-width="1" fill="none" /><rect x="281.9" y="217.4" width="1.2" height="3.2" fill="#fff"/><path d="M282.5 217.2 Q281.2 218.4 281.9 219.6 Q282.3 220.2 282.5 220.8" stroke="#888" stroke-width="0.55" fill="none" /><rect x="358.9" y="207.9" width="1.2" height="3.2" fill="#fff"/><path d="M359.5 207.7 Q358.2 208.9 358.9 210.1 Q359.3 210.7 359.5 211.3" stroke="#888" stroke-width="0.55" fill="none" /><path d="M359.5 207 V262.5" stroke="#8a8a8a" stroke-width="1" fill="none" /><path d="M358.2 254.6 L360.6 252.2" stroke="#3a3a3a" stroke-width="1.0" fill="none" /><path d="M358.6 252.6 L360.2 254.2" stroke="#555" stroke-width="0.6" fill="none" /><path d="M359.5 262.5 Q357.0 263.0 355.5 266.5 M359.5 262.5 Q362.0 263.0 363.5 266.5 M356.5 263.7 L355.7 263.5 M362.5 263.7 L363.3 263.5" stroke="#8a8a8a" stroke-width="0.7" fill="none" /><rect x="388.9" y="207.9" width="1.2" height="3.2" fill="#fff"/><path d="M389.5 207.7 Q388.2 208.9 388.9 210.1 Q389.3 210.7 389.5 211.3" stroke="#888" stroke-width="0.55" fill="none" /><path d="M389.5 207 V258.9" stroke="#8a8a8a" stroke-width="1" fill="none" /><path d="M388.2 254.6 L390.6 252.2" stroke="#3a3a3a" stroke-width="1.0" fill="none" /><path d="M388.6 252.6 L390.2 254.2" stroke="#555" stroke-width="0.6" fill="none" /><circle cx="389.5" cy="262.5" r="3.6" fill="#fff" stroke="#8a8a8a" stroke-width="0.7"/><rect x="418.9" y="207.9" width="1.2" height="3.2" fill="#fff"/><path d="M419.5 207.7 Q418.2 208.9 418.9 210.1 Q419.3 210.7 419.5 211.3" stroke="#888" stroke-width="0.55" fill="none" /><path d="M419.5 207 V258.3" stroke="#8a8a8a" stroke-width="1" fill="none" /><path d="M418.2 253.1 L420.6 250.7" stroke="#3a3a3a" stroke-width="1.0" fill="none" /><path d="M418.6 251.1 L420.2 252.7" stroke="#555" stroke-width="0.6" fill="none" /><path d="M415.8 264.3 L419.5 258.3 L423.2 264.3 Z" fill="#fff" stroke="#8a8a8a" stroke-width="0.75"/><path d="M418.3 261.5 L418.9 262.5 M420.7 261.5 L420.1 262.5" stroke="#8a8a8a" stroke-width="0.45" fill="none" /><path d="M234.9 232.5 H328.8" stroke="#8a8a8a" stroke-width="1" fill="none" /><path d="M237 232.5 V259.09999999999997" stroke="#8a8a8a" stroke-width="1" fill="none" /><path d="M235.7 254.79999999999998 L238.1 252.39999999999998" stroke="#3a3a3a" stroke-width="1.0" fill="none" /><path d="M236.1 252.79999999999998 L237.7 254.39999999999998" stroke="#555" stroke-width="0.6" fill="none" /><circle cx="237" cy="262.7" r="3.6" fill="#fff" stroke="#8a8a8a" stroke-width="0.7"/><path d="M234.552 260.252 L239.448 265.14799999999997 M239.448 260.252 L234.552 265.14799999999997" stroke="#8a8a8a" stroke-width="0.5" fill="none" /><path d="M267 232.5 V259.09999999999997" stroke="#8a8a8a" stroke-width="1" fill="none" /><path d="M265.7 254.79999999999998 L268.1 252.39999999999998" stroke="#3a3a3a" stroke-width="1.0" fill="none" /><path d="M266.1 252.79999999999998 L267.7 254.39999999999998" stroke="#555" stroke-width="0.6" fill="none" /><circle cx="267" cy="262.7" r="3.6" fill="#fff" stroke="#8a8a8a" stroke-width="0.7"/><path d="M264.552 260.252 L269.448 265.14799999999997 M269.448 260.252 L264.552 265.14799999999997" stroke="#8a8a8a" stroke-width="0.5" fill="none" /><path d="M297 232.5 V259.09999999999997" stroke="#8a8a8a" stroke-width="1" fill="none" /><path d="M295.7 254.79999999999998 L298.1 252.39999999999998" stroke="#3a3a3a" stroke-width="1.0" fill="none" /><path d="M296.1 252.79999999999998 L297.7 254.39999999999998" stroke="#555" stroke-width="0.6" fill="none" /><circle cx="297" cy="262.7" r="3.6" fill="#fff" stroke="#8a8a8a" stroke-width="0.7"/><path d="M294.552 260.252 L299.448 265.14799999999997 M299.448 260.252 L294.552 265.14799999999997" stroke="#8a8a8a" stroke-width="0.5" fill="none" /><path d="M327.5 232.5 V259.4" stroke="#8a8a8a" stroke-width="1" fill="none" /><path d="M326.2 254.79999999999998 L328.6 252.39999999999998" stroke="#3a3a3a" stroke-width="1.0" fill="none" /><path d="M326.6 252.79999999999998 L328.2 254.39999999999998" stroke="#555" stroke-width="0.6" fill="none" /><ellipse cx="327.5" cy="262.7" rx="5.6" ry="3.3" fill="#fff" stroke="#8a8a8a" stroke-width="0.7"/><circle cx="325.5" cy="262.7" r="0.5" fill="#8a8a8a"/><circle cx="329.5" cy="262.7" r="0.5" fill="#8a8a8a"/><path d="M596.3 213.5 H724.2" stroke="#8a8a8a" stroke-width="1" fill="none" /><path d="M597.5 213.5 V265.6" stroke="#8a8a8a" stroke-width="1" fill="none" /><rect x="596.9" y="220.0" width="1.2" height="3.2" fill="#fff"/><path d="M597.5 219.79999999999998 Q596.2 221.0 596.9 222.2 Q597.3 222.79999999999998 597.5 223.4" stroke="#888" stroke-width="0.55" fill="none" /><path d="M596.2 260.90000000000003 L598.6 258.5" stroke="#3a3a3a" stroke-width="1.0" fill="none" /><path d="M596.6 258.90000000000003 L598.2 260.5" stroke="#555" stroke-width="0.6" fill="none" /><circle cx="597.5" cy="270.2" r="4.6" fill="#fff" stroke="#8a8a8a" stroke-width="0.7"/><circle cx="597.5" cy="275.2" r="4.6" fill="none" stroke="#8a8a8a" stroke-width="0.7"/><path d="M595.2 272.6 Q597.5 271.3 599.8 272.6" stroke="#8a8a8a" stroke-width="0.5" fill="none" /><rect x="584.5" y="274.6" width="5.3" height="4.3" rx="1" fill="#fff" stroke="#555" stroke-width="0.5"/><path d="M586 276.7 Q586.7 275.7 587.2 276.7 Q587.8 277.7 588.4 276.7" stroke="#444" stroke-width="0.45" fill="none" /><path d="M589.8 276.8 H593 V282.5" stroke="#555" stroke-width="0.5" fill="none" /><path d="M591.3 282.6 L592.6 281 L594 282.6 Z" fill="#333"/><path d="M597.5 279.8 V282.5" stroke="#8a8a8a" stroke-width="1" fill="none" /><path d="M723 213.5 V279.3" stroke="#8a8a8a" stroke-width="1" fill="none" /><rect x="722.4" y="214.20000000000002" width="1.2" height="3.2" fill="#fff"/><path d="M723 214.0 Q721.7 215.20000000000002 722.4 216.4 Q722.8 217.0 723 217.60000000000002" stroke="#888" stroke-width="0.55" fill="none" /><path d="M721.7 271.6 L724.1 269.2" stroke="#3a3a3a" stroke-width="1.0" fill="none" /><path d="M722.1 269.6 L723.7 271.2" stroke="#555" stroke-width="0.6" fill="none" /><path d="M723 279.3 Q721.1 279.6 719.8 282.5 M723 279.3 Q724.9 279.6 726.2 282.5" stroke="#8a8a8a" stroke-width="0.7" fill="none" /><path d="M524.4 282.5 H662.9" stroke="#8a8a8a" stroke-width="1" fill="none" /><circle cx="525.6" cy="284.4" r="0.8" fill="#222"/><rect x="534.4" y="283.9" width="1.2" height="3.2" fill="#fff"/><path d="M535 283.7 Q533.7 284.9 534.4 286.1 Q534.8 286.7 535 287.3" stroke="#888" stroke-width="0.55" fill="none" /><path d="M535 282.5 V331.5" stroke="#8a8a8a" stroke-width="1" fill="none" /><path d="M533.7 327.20000000000005 L536.1 324.8" stroke="#3a3a3a" stroke-width="1.0" fill="none" /><path d="M534.1 325.20000000000005 L535.7 326.8" stroke="#555" stroke-width="0.6" fill="none" /><circle cx="535" cy="335.1" r="3.6" fill="#fff" stroke="#8a8a8a" stroke-width="0.7"/><path d="M532.552 332.65200000000004 L537.448 337.548 M537.448 332.65200000000004 L532.552 337.548" stroke="#8a8a8a" stroke-width="0.5" fill="none" /><rect x="566.4" y="283.9" width="1.2" height="3.2" fill="#fff"/><path d="M567 283.7 Q565.7 284.9 566.4 286.1 Q566.8 286.7 567 287.3" stroke="#888" stroke-width="0.55" fill="none" /><path d="M567 282.5 V331.5" stroke="#8a8a8a" stroke-width="1" fill="none" /><path d="M565.7 327.20000000000005 L568.1 324.8" stroke="#3a3a3a" stroke-width="1.0" fill="none" /><path d="M566.1 325.20000000000005 L567.7 326.8" stroke="#555" stroke-width="0.6" fill="none" /><circle cx="567" cy="335.1" r="3.6" fill="#fff" stroke="#8a8a8a" stroke-width="0.7"/><path d="M564.552 332.65200000000004 L569.448 337.548 M569.448 332.65200000000004 L564.552 337.548" stroke="#8a8a8a" stroke-width="0.5" fill="none" /><rect x="598.4" y="283.9" width="1.2" height="3.2" fill="#fff"/><path d="M599 283.7 Q597.7 284.9 598.4 286.1 Q598.8 286.7 599 287.3" stroke="#888" stroke-width="0.55" fill="none" /><path d="M599 282.5 V331.5" stroke="#8a8a8a" stroke-width="1" fill="none" /><path d="M597.7 327.20000000000005 L600.1 324.8" stroke="#3a3a3a" stroke-width="1.0" fill="none" /><path d="M598.1 325.20000000000005 L599.7 326.8" stroke="#555" stroke-width="0.6" fill="none" /><circle cx="599" cy="335.1" r="3.6" fill="#fff" stroke="#8a8a8a" stroke-width="0.7"/><path d="M661 282.5 V339" stroke="#8a8a8a" stroke-width="1" fill="none" /><rect x="660.4" y="288.2" width="1.2" height="3.2" fill="#fff"/><path d="M661 288.0 Q659.7 289.2 660.4 290.40000000000003 Q660.8 291.0 661 291.6" stroke="#888" stroke-width="0.55" fill="none" /><path d="M659.7 329.1 L662.1 326.7" stroke="#3a3a3a" stroke-width="1.0" fill="none" /><path d="M660.1 327.1 L661.7 328.7" stroke="#555" stroke-width="0.6" fill="none" /><rect x="660.4" y="331.4" width="1.2" height="3.2" fill="#fff"/><path d="M661 331.2 Q659.7 332.4 660.4 333.6 Q660.8 334.2 661 334.8" stroke="#888" stroke-width="0.55" fill="none" /><path d="M630.2 339 H691.2" stroke="#8a8a8a" stroke-width="1" fill="none" /><rect x="630.4" y="345.4" width="1.2" height="3.2" fill="#fff"/><path d="M631 345.2 Q629.7 346.4 630.4 347.6 Q630.8 348.2 631 348.8" stroke="#888" stroke-width="0.55" fill="none" /><path d="M631 339 V391.3" stroke="#8a8a8a" stroke-width="1" fill="none" /><path d="M629.7 386.70000000000005 L632.1 384.3" stroke="#3a3a3a" stroke-width="1.0" fill="none" /><path d="M630.1 384.70000000000005 L631.7 386.3" stroke="#555" stroke-width="0.6" fill="none" /><ellipse cx="631" cy="394.6" rx="5.6" ry="3.3" fill="#fff" stroke="#8a8a8a" stroke-width="0.7"/><circle cx="629" cy="394.6" r="0.5" fill="#8a8a8a"/><circle cx="633" cy="394.6" r="0.5" fill="#8a8a8a"/><rect x="660.4" y="345.4" width="1.2" height="3.2" fill="#fff"/><path d="M661 345.2 Q659.7 346.4 660.4 347.6 Q660.8 348.2 661 348.8" stroke="#888" stroke-width="0.55" fill="none" /><path d="M661 339 V391.3" stroke="#8a8a8a" stroke-width="1" fill="none" /><path d="M659.7 386.70000000000005 L662.1 384.3" stroke="#3a3a3a" stroke-width="1.0" fill="none" /><path d="M660.1 384.70000000000005 L661.7 386.3" stroke="#555" stroke-width="0.6" fill="none" /><ellipse cx="661" cy="394.6" rx="5.6" ry="3.3" fill="#fff" stroke="#8a8a8a" stroke-width="0.7"/><circle cx="659" cy="394.6" r="0.5" fill="#8a8a8a"/><circle cx="663" cy="394.6" r="0.5" fill="#8a8a8a"/><rect x="690.4" y="345.4" width="1.2" height="3.2" fill="#fff"/><path d="M691 345.2 Q689.7 346.4 690.4 347.6 Q690.8 348.2 691 348.8" stroke="#888" stroke-width="0.55" fill="none" /><path d="M691 339 V391.3" stroke="#8a8a8a" stroke-width="1" fill="none" /><path d="M689.7 386.70000000000005 L692.1 384.3" stroke="#3a3a3a" stroke-width="1.0" fill="none" /><path d="M690.1 384.70000000000005 L691.7 386.3" stroke="#555" stroke-width="0.6" fill="none" /><ellipse cx="691" cy="394.6" rx="5.6" ry="3.3" fill="#fff" stroke="#8a8a8a" stroke-width="0.7"/><circle cx="689" cy="394.6" r="0.5" fill="#8a8a8a"/><circle cx="693" cy="394.6" r="0.5" fill="#8a8a8a"/></svg></body></html>
